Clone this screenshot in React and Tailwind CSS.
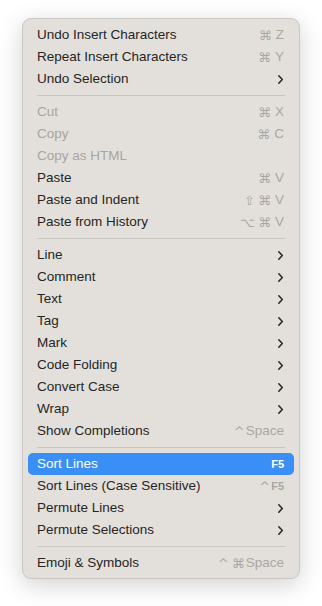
const groups = [
  [
    { label: 'Undo Insert Characters', keys: ['⌘', 'Z'] },
    { label: 'Repeat Insert Characters', keys: ['⌘', 'Y'] },
    { label: 'Undo Selection', sub: true },
  ],
  [
    { label: 'Cut', keys: ['⌘', 'X'], disabled: true },
    { label: 'Copy', keys: ['⌘', 'C'], disabled: true },
    { label: 'Copy as HTML', disabled: true },
    { label: 'Paste', keys: ['⌘', 'V'] },
    { label: 'Paste and Indent', keys: ['⇧', '⌘', 'V'] },
    { label: 'Paste from History', keys: ['⌥', '⌘', 'V'] },
  ],
  [
    { label: 'Line', sub: true },
    { label: 'Comment', sub: true },
    { label: 'Text', sub: true },
    { label: 'Tag', sub: true },
    { label: 'Mark', sub: true },
    { label: 'Code Folding', sub: true },
    { label: 'Convert Case', sub: true },
    { label: 'Wrap', sub: true },
    { label: 'Show Completions', keys: ['^', 'Space'] },
  ],
  [
    { label: 'Sort Lines', fkey: 'F5', active: true },
    { label: 'Sort Lines (Case Sensitive)', ctrl: true, fkey: 'F5' },
    { label: 'Permute Lines', sub: true },
    { label: 'Permute Selections', sub: true },
  ],
  [{ label: 'Emoji & Symbols', keys: ['^', '⌘', 'Space'] }],
];

const symbolFont = "font-['DejaVu_Sans',sans-serif]";

function Chevron() {
  return (
    <svg width="7" height="11" viewBox="0 0 7 11" fill="none" className="mr-[1px]">
      <path d="M1.8 1.8 L5.3 5.5 L1.8 9.2" stroke="#2b2a29" strokeWidth="1.6" strokeLinecap="round" strokeLinejoin="round" />
    </svg>
  );
}

function Shortcut({ item }) {
  const color = item.active ? 'text-white' : 'text-[#aaa7a2]';
  if (item.fkey) {
    return (
      <span className={`flex items-center ${color} pr-[1px]`}>
        {item.ctrl && <span className={`text-[13px] mr-[1px] ${symbolFont}`}>^</span>}
        <span className="text-[11px] font-bold">{item.fkey}</span>
      </span>
    );
  }
  return (
    <span className={`flex items-center ${color} text-[13.5px] pr-[1px]`}>
      {item.keys.map((k, i) => {
        const isSym = /[⌘⇧⌥^]/.test(k);
        const next = item.keys[i + 1];
        const gap = next && next.length === 1 && !/[⌘⇧⌥^]/.test(next) ? 'mr-[4px]' : next === 'Space' ? 'mr-[1px]' : next ? 'mr-[3px]' : '';
        return (
          <span key={i} className={`${isSym ? `${symbolFont} text-[13px]` : ''} ${gap}`}>
            {k}
          </span>
        );
      })}
    </span>
  );
}

function Row({ item }) {
  let cls = 'text-[#262524]';
  if (item.disabled) cls = 'text-[#a8a5a0]';
  if (item.active) cls = 'text-white bg-[#3a8ff7]';
  return (
    <div className={`h-[22px] px-[9px] pt-[1px] rounded-[5px] flex items-center justify-between text-[13.5px] ${cls}`}>
      <span>{item.label}</span>
      {item.sub ? <Chevron /> : item.keys || item.fkey ? <Shortcut item={item} /> : null}
    </div>
  );
}

export default function App() {
  return (
    <div className="w-[322px] h-[606px] bg-white pt-[18px] pl-[22px] font-['Liberation_Sans',Arial,sans-serif]">
      <div className="w-[278px] rounded-[9px] bg-[#e3e0db] border border-[#cac7c2] px-[5px] pt-[5px] pb-[4px] shadow-[0_6px_24px_rgba(0,0,0,0.18)]">
        {groups.map((g, gi) => (
          <div key={gi}>
            {gi > 0 && (
              <div className="h-[11px] flex items-center px-[9px]">
                <div className="h-px w-full bg-[#c9c6c1]" />
              </div>
            )}
            {g.map((item) => (
              <Row key={item.label} item={item} />
            ))}
          </div>
        ))}
      </div>
    </div>
  );
}
